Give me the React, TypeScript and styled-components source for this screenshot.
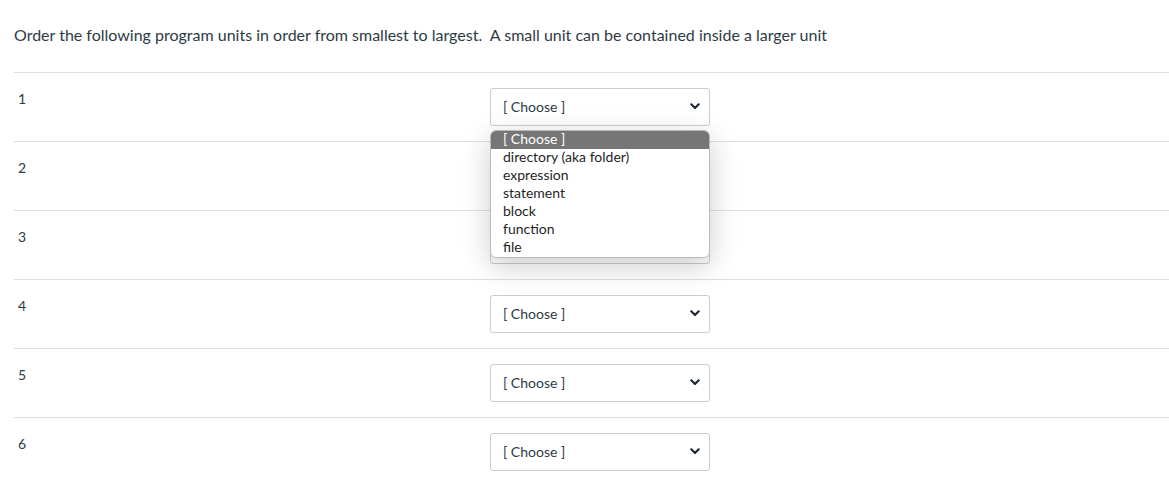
import React from "react";
import styled, { createGlobalStyle } from "styled-components";

const GlobalStyle = createGlobalStyle`
  body {
    margin: 0;
    background: #fff;
    font-family: Lato, "Open Sans", sans-serif;
    color: #2d3b45;
  }
`;

const Page = styled.div`
  padding: 0 0 0 14px;
  width: 1169px;
  box-sizing: border-box;
`;

const Question = styled.p`
  margin: 0;
  padding-top: 25px;
  height: 72px;
  box-sizing: border-box;
  font-size: 16px;
  line-height: 20px;
`;

const List = styled.div`
  display: flex;
  flex-direction: column;
`;

const Row = styled.div`
  display: grid;
  grid-template-columns: 476px 220px;
  align-items: start;
  border-top: 1px solid #dcdfe2;
  padding: 15px 0;
`;

const Number = styled.span`
  padding: 1px 0 0 4px;
  font-size: 14px;
  line-height: 20px;
`;

const SelectWrap = styled.div`
  position: relative;
`;

const Select = styled.div`
  display: flex;
  align-items: center;
  justify-content: space-between;
  height: 38px;
  box-sizing: border-box;
  padding: 0 9px 1px 12px;
  border: 1px solid #c7cdd1;
  border-radius: 3px;
  background: #fff;
  font-size: 14px;
  color: #2d3b45;
`;

const Chevron = () => (
  <svg width="10" height="7" viewBox="0 0 10 7" aria-hidden>
    <path
      d="M1.3 1.3 L5 5 L8.7 1.3"
      fill="none"
      stroke="#1f2a33"
      strokeWidth="2.2"
      strokeLinecap="round"
      strokeLinejoin="round"
    />
  </svg>
);

const Menu = styled.ul`
  position: absolute;
  top: calc(100% + 4px);
  left: 0;
  width: 220px;
  margin: 0;
  padding: 0;
  list-style: none;
  background: #fff;
  border: 1px solid #b9b9b9;
  border-radius: 6px;
  box-sizing: border-box;
  overflow: hidden;
  box-shadow: 0 8px 30px rgba(0, 0, 0, 0.2);
  z-index: 10;
`;

const Option = styled.li<{ $active?: boolean }>`
  height: 18px;
  padding-left: 12px;
  font-size: 14px;
  line-height: 16px;
  color: ${(p) => (p.$active ? "#fff" : "#1f1f1f")};
  background: ${(p) => (p.$active ? "#767676" : "transparent")};
`;

const options = [
  "[ Choose ]",
  "directory (aka folder)",
  "expression",
  "statement",
  "block",
  "function",
  "file",
];

export default function App() {
  return (
    <Page>
      <GlobalStyle />
      <Question>
        Order the following program units in order from smallest to
        largest.&nbsp; A small unit can be contained inside a larger unit
      </Question>
      <List>
        {[1, 2, 3, 4, 5, 6].map((n) => (
          <Row key={n}>
            <Number>{n}</Number>
            <SelectWrap>
              <Select>
                <span>[ Choose ]</span>
                <Chevron />
              </Select>
              {n === 1 && (
                <Menu>
                  {options.map((o, i) => (
                    <Option key={o} $active={i === 0}>
                      {o}
                    </Option>
                  ))}
                </Menu>
              )}
            </SelectWrap>
          </Row>
        ))}
      </List>
    </Page>
  );
}
